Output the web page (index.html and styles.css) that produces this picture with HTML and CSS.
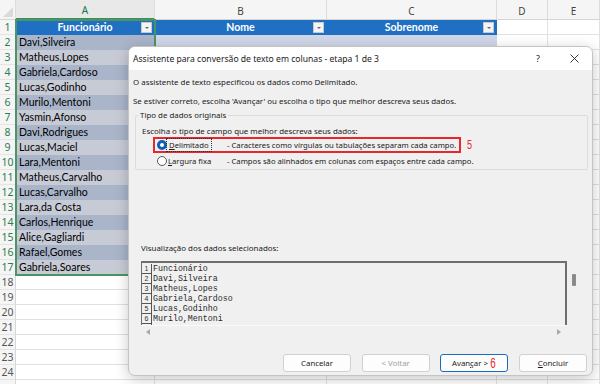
FILE: index.html
```html
<!DOCTYPE html>
<html lang="pt">
<head>
<meta charset="utf-8">
<title>Excel - Texto para colunas</title>
<link rel="stylesheet" href="styles.css">
</head>
<body>
<div class="sheet">
  <div class="ch corner"><span class="tri"></span></div>
  <div class="ch sel">A</div>
  <div class="ch">B</div>
  <div class="ch">C</div>
  <div class="ch">D</div>
  <div class="ch">E</div>

  <div class="rn s">1</div>
  <div class="c h"><span>Funcionário</span><span class="dd"></span></div>
  <div class="c h"><span>Nome</span><span class="dd"></span></div>
  <div class="c h"><span>Sobrenome</span><span class="dd"></span></div>
  <div class="c"></div><div class="c"></div>

  <div class="rn s">2</div><div class="c a ev">Davi,Silveira</div><div class="c bc ev"></div><div class="c bc ev"></div><div class="c"></div><div class="c"></div>
  <div class="rn s">3</div><div class="c a od">Matheus,Lopes</div><div class="c"></div><div class="c"></div><div class="c"></div><div class="c"></div>
  <div class="rn s">4</div><div class="c a ev">Gabriela,Cardoso</div><div class="c bc ev"></div><div class="c bc ev"></div><div class="c"></div><div class="c"></div>
  <div class="rn s">5</div><div class="c a od">Lucas,Godinho</div><div class="c"></div><div class="c"></div><div class="c"></div><div class="c"></div>
  <div class="rn s">6</div><div class="c a ev">Murilo,Mentoni</div><div class="c bc ev"></div><div class="c bc ev"></div><div class="c"></div><div class="c"></div>
  <div class="rn s">7</div><div class="c a od">Yasmin,Afonso</div><div class="c"></div><div class="c"></div><div class="c"></div><div class="c"></div>
  <div class="rn s">8</div><div class="c a ev">Davi,Rodrigues</div><div class="c bc ev"></div><div class="c bc ev"></div><div class="c"></div><div class="c"></div>
  <div class="rn s">9</div><div class="c a od">Lucas,Maciel</div><div class="c"></div><div class="c"></div><div class="c"></div><div class="c"></div>
  <div class="rn s">10</div><div class="c a ev">Lara,Mentoni</div><div class="c bc ev"></div><div class="c bc ev"></div><div class="c"></div><div class="c"></div>
  <div class="rn s">11</div><div class="c a od">Matheus,Carvalho</div><div class="c"></div><div class="c"></div><div class="c"></div><div class="c"></div>
  <div class="rn s">12</div><div class="c a ev">Lucas,Carvalho</div><div class="c bc ev"></div><div class="c bc ev"></div><div class="c"></div><div class="c"></div>
  <div class="rn s">13</div><div class="c a od">Lara,da Costa</div><div class="c"></div><div class="c"></div><div class="c"></div><div class="c"></div>
  <div class="rn s">14</div><div class="c a ev">Carlos,Henrique</div><div class="c bc ev"></div><div class="c bc ev"></div><div class="c"></div><div class="c"></div>
  <div class="rn s">15</div><div class="c a od">Alice,Gagliardi</div><div class="c"></div><div class="c"></div><div class="c"></div><div class="c"></div>
  <div class="rn s">16</div><div class="c a ev">Rafael,Gomes</div><div class="c bc ev"></div><div class="c bc ev"></div><div class="c"></div><div class="c"></div>
  <div class="rn s">17</div><div class="c a od">Gabriela,Soares</div><div class="c"></div><div class="c"></div><div class="c"></div><div class="c"></div>
  <div class="rn">18</div><div class="c"></div><div class="c"></div><div class="c"></div><div class="c"></div><div class="c"></div>
  <div class="rn">19</div><div class="c"></div><div class="c"></div><div class="c"></div><div class="c"></div><div class="c"></div>
  <div class="rn">20</div><div class="c"></div><div class="c"></div><div class="c"></div><div class="c"></div><div class="c"></div>
  <div class="rn">21</div><div class="c"></div><div class="c"></div><div class="c"></div><div class="c"></div><div class="c"></div>
  <div class="rn">22</div><div class="c"></div><div class="c"></div><div class="c"></div><div class="c"></div><div class="c"></div>
  <div class="rn">23</div><div class="c"></div><div class="c"></div><div class="c"></div><div class="c"></div><div class="c"></div>
  <div class="rn">24</div><div class="c"></div><div class="c"></div><div class="c"></div><div class="c"></div><div class="c"></div>
  <div class="rn"></div><div class="c"></div><div class="c"></div><div class="c"></div><div class="c"></div><div class="c"></div>

  <div class="selbox"></div>

  <div class="dlg">
    <div class="tbar">
      <span class="ttl">Assistente para conversão de texto em colunas - etapa 1 de 3</span>
      <span class="tbtn">?</span>
      <span class="tbtn"><svg width="9" height="9" viewBox="0 0 9 9"><path d="M0.5 0.5L8.5 8.5M8.5 0.5L0.5 8.5" stroke="#222" stroke-width="0.9" fill="none"/></svg></span>
    </div>
    <div class="dbody">
      <p class="txt l1">O assistente de texto especificou os dados como Delimitado.</p>
      <p class="txt l2">Se estiver correto, escolha 'Avançar' ou escolha o tipo que melhor descreva seus dados.</p>
      <div class="grp">
        <div class="gtitle">Tipo de dados originais</div>
        <p class="txt gq">Escolha o tipo de campo que melhor descreva seus dados:</p>
        <div class="optline">
          <div class="opt hl">
            <span class="radio on"></span>
            <span class="olab"><span class="focus"><u>D</u>elimitado</span></span>
            <span class="odesc">- Caracteres como vírgulas ou tabulações separam cada campo.</span>
          </div>
          <span class="mark">5</span>
        </div>
        <div class="opt o2">
          <span class="radio"></span>
          <span class="olab"><u>L</u>argura fixa</span>
          <span class="odesc">- Campos são alinhados em colunas com espaços entre cada campo.</span>
        </div>
      </div>
      <p class="txt vlab">Visualização dos dados selecionados:</p>
      <div class="pv">
        <div class="pvmain">
          <div class="pvbox">
            <div class="pl"><span class="ln">1</span><span class="pt">Funcionário</span></div>
            <div class="pl"><span class="ln">2</span><span class="pt">Davi,Silveira</span></div>
            <div class="pl"><span class="ln">3</span><span class="pt">Matheus,Lopes</span></div>
            <div class="pl"><span class="ln">4</span><span class="pt">Gabriela,Cardoso</span></div>
            <div class="pl"><span class="ln">5</span><span class="pt">Lucas,Godinho</span></div>
            <div class="pl"><span class="ln">6</span><span class="pt">Murilo,Mentoni</span></div>
            <div class="lnfill"></div>
          </div>
          <div class="hs">
            <svg width="4" height="6" viewBox="0 0 4 6"><path d="M4 0L0 3L4 6Z" fill="#A8A8A8"/></svg>
            <svg width="4" height="6" viewBox="0 0 4 6"><path d="M0 0L4 3L0 6Z" fill="#A8A8A8"/></svg>
          </div>
        </div>
        <div class="vs"><span class="thumb"></span></div>
      </div>
      <div class="btns">
        <span class="btn">Cancelar</span>
        <span class="btn dis">&lt; Voltar</span>
        <span class="btn def">Avan<u>ç</u>ar &gt; <span class="mark m6">6</span></span>
        <span class="btn"><u>C</u>oncluir</span>
      </div>
    </div>
  </div>
</div>
</body>
</html>
```

FILE: styles.css
```css
html, body {
  margin: 0;
  padding: 0;
}
body {
  width: 600px;
  height: 384px;
  overflow: hidden;
  background: #ffffff;
  font-family: Lato, "Liberation Sans", sans-serif;
}
.sheet {
  position: relative;
  display: grid;
  grid-template-columns: 16px 139px 172px 170px 51px 52px;
  grid-template-rows: 20px;
  grid-auto-rows: 15px;
}
.ch {
  box-sizing: border-box;
  background: #F5F5F5;
  border-right: 1px solid #DCDCDC;
  border-bottom: 1px solid #D4D4D4;
  display: flex;
  align-items: center;
  justify-content: center;
  font: 10px "Noto Sans", sans-serif;
  color: #444;
  padding-top: 2px;
}
.ch.sel {
  background: #E9E9E9;
  color: #217346;
  border-bottom: 2px solid #3F8E5E;
}
.corner {
  position: relative;
}
.tri {
  position: absolute;
  right: 2px;
  bottom: 2px;
  width: 0;
  height: 0;
  border-left: 10px solid transparent;
  border-bottom: 10px solid #DADADA;
}
.rn {
  box-sizing: border-box;
  background: #F5F5F5;
  border-right: 1px solid #D6D6D6;
  border-bottom: 1px solid #E4E4E4;
  font: 10.5px "Noto Sans", sans-serif;
  color: #555;
  text-align: center;
  line-height: 15px;
  white-space: nowrap;
  overflow: hidden;
}
.rn.s {
  color: #2E7D4F;
}
.c {
  box-sizing: border-box;
  border-right: 1px solid #E1E1E1;
  border-bottom: 1px solid #E1E1E1;
  font-size: 10.5px;
  line-height: 14px;
  padding-left: 3px;
  white-space: nowrap;
  overflow: hidden;
  color: #000;
}
.c.h {
  position: relative;
  background: #1F6FC2;
  border-color: #1F6FC2;
  color: #fff;
  font-weight: bold;
  display: flex;
  align-items: center;
  justify-content: center;
  padding-left: 0;
}
.dd {
  position: absolute;
  right: 2px;
  top: 2px;
  width: 11px;
  height: 11px;
  box-sizing: border-box;
  background: #F4F4F4;
  border: 1px solid #C8C8C8;
}
.dd::after {
  content: "";
  position: absolute;
  left: 3px;
  top: 4px;
  border-left: 2px solid transparent;
  border-right: 2px solid transparent;
  border-top: 2px solid #666;
}
.c.ev {
  background: #AAB5CA;
  border-color: transparent;
}
.c.od {
  background: #C7CBD5;
  border-color: transparent;
}
.c.bc.ev {
  background: #D0D7E8;
}
.selbox {
  position: absolute;
  left: 15px;
  top: 19px;
  width: 141px;
  height: 257px;
  box-sizing: border-box;
  border: 2px solid #4A9466;
  pointer-events: none;
}

/* dialog */
.dlg {
  position: absolute;
  left: 128px;
  top: 46px;
  width: 465px;
  height: 330px;
  box-sizing: border-box;
  background: #F0F0F0;
  border: 1px solid #C4C4C4;
  border-radius: 7px;
  box-shadow: 0 3px 14px rgba(0, 0, 0, 0.22);
  overflow: hidden;
  display: flex;
  flex-direction: column;
  font-family: "Noto Sans", sans-serif;
  color: #1A1A1A;
}
.tbar {
  flex: none;
  height: 23px;
  background: #ffffff;
  display: flex;
  align-items: center;
  padding-left: 4px;
}
.ttl {
  flex: 1;
  font-size: 8.6px;
  white-space: nowrap;
}
.tbtn {
  width: 36px;
  display: flex;
  align-items: center;
  justify-content: center;
  font-size: 9px;
}
.dbody {
  flex: 1;
  display: flex;
  flex-direction: column;
  padding: 0 4px;
}
.txt {
  margin: 0;
  font-size: 7.9px;
  line-height: 12px;
  white-space: nowrap;
}
.l1 {
  margin-top: 6px;
}
.l2 {
  margin-top: 7px;
}
.grp {
  margin: 8px 0 0 2px;
  border: 1px solid #DCDCDC;
  border-radius: 2px;
  padding: 0 0 0 6px;
}
.gtitle {
  margin: -7px 0 0 -4px;
  width: max-content;
  padding: 0 2px;
  background: #F0F0F0;
  font-size: 7.9px;
  line-height: 12px;
}
.gq {
  margin-top: 4px;
}
.optline {
  display: flex;
  align-items: center;
}
.opt {
  display: flex;
  align-items: center;
  height: 12px;
  font-size: 7.7px;
  white-space: nowrap;
}
.opt.hl {
  margin-left: 11px;
  border: 2px solid #E8272C;
  padding: 0 3px 0 2px;
}
.opt.o2 {
  margin-left: 15px;
  height: 16px;
}
.radio {
  width: 10px;
  height: 10px;
  box-sizing: border-box;
  border-radius: 50%;
  border: 1px solid #5A5A5A;
  background: #fff;
  flex: none;
}
.radio.on {
  border: 3px solid #0A62BC;
  background: #fff;
}
.olab {
  width: 59px;
  margin-left: 1px;
  flex: none;
}
.focus {
  outline: 1px dotted #333;
  outline-offset: 1px;
  padding: 0 1px;
}
.mark {
  color: #E8272C;
  font: 13px "Liberation Sans", sans-serif;
  display: inline-block;
  transform: scaleX(0.7);
  margin-left: 5px;
  line-height: 12px;
}
.vlab {
  margin: 72px 0 0 8px;
}
.pv {
  margin: 7px 0 0 8px;
  display: flex;
}
.pvmain {
  width: 426px;
}
.pvbox {
  height: 64px;
  box-sizing: border-box;
  border-top: 2px solid #6E6E6E;
  border-left: 1px solid #6E6E6E;
  border-right: 2px solid #6E6E6E;
  padding-top: 1px;
  display: flex;
  flex-direction: column;
}
.pl {
  display: flex;
  height: 10px;
}
.ln {
  width: 10px;
  flex: none;
  box-sizing: border-box;
  border-right: 1px solid #555;
  border-bottom: 1px solid #555;
  font: 7px/9px "Liberation Sans", sans-serif;
  color: #333;
  text-align: center;
}
.pt {
  font: 8.3px/10px "Liberation Mono", monospace;
  color: #2A2A2A;
  padding-left: 1px;
  white-space: nowrap;
}
.lnfill {
  width: 10px;
  flex: 1;
  box-sizing: border-box;
  border-right: 1px solid #555;
}
.hs {
  height: 12px;
  border-top: 1px solid #FAFAFA;
  display: flex;
  align-items: center;
  justify-content: space-between;
  padding: 0 6px 0 5px;
}
.vs {
  width: 13px;
}
.thumb {
  display: block;
  width: 4px;
  height: 12px;
  margin: 13px 0 0 5px;
  background: #8A8A8A;
  border-radius: 1px;
}
.btns {
  margin: 16px 1px 0 0;
  display: flex;
  justify-content: flex-end;
  gap: 10.67px;
}
.btn {
  width: 68px;
  height: 18px;
  box-sizing: border-box;
  background: #FDFDFD;
  border: 1px solid #D0D0D0;
  border-radius: 3px;
  display: flex;
  align-items: center;
  justify-content: center;
  font-size: 7.8px;
  color: #1A1A1A;
  white-space: nowrap;
}
.btn.dis {
  color: #A0A0A0;
}
.btn.def {
  border: 1.5px solid #1A6BC4;
}
.m6 {
  margin-left: 1px;
  font-size: 14px;
}
```
